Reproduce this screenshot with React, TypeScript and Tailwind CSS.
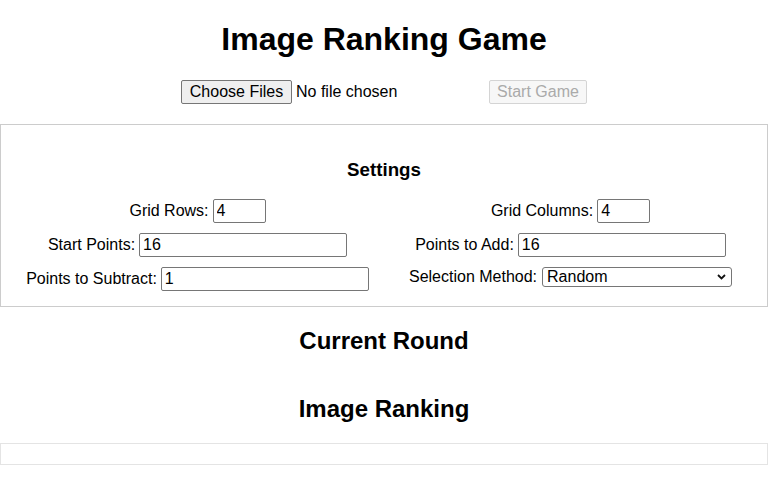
import { useState } from "react";

type Field = {
  label: string;
  value: string;
  width: string;
};

const leftFields: Field[] = [
  { label: "Grid Rows:", value: "4", width: "w-[53px]" },
  { label: "Start Points:", value: "16", width: "w-[208px]" },
  { label: "Points to Subtract:", value: "1", width: "w-[208px]" },
];

const rightFields: Field[] = [
  { label: "Grid Columns:", value: "4", width: "w-[53px]" },
  { label: "Points to Add:", value: "16", width: "w-[208px]" },
];

function SettingInput({ field }: { field: Field }) {
  const [value, setValue] = useState(field.value);
  return (
    <div className="flex items-center justify-center gap-[4px] h-[24px]">
      <label className="text-[16px] leading-[20px]">{field.label}</label>
      <input
        type="text"
        value={value}
        onChange={(e) => setValue(e.target.value)}
        className={`${field.width} h-[24px] border border-[#767676] rounded-[2px] px-[3px] text-[16px] outline-none bg-white`}
      />
    </div>
  );
}

export default function App() {
  return (
    <div className="flex flex-col w-full min-h-[480px] bg-white text-black font-['Liberation_Sans',Arial,sans-serif]">
      <h1 className="mt-[21px] mb-[22px] text-[32px] leading-[37px] font-bold text-center">
        Image Ranking Game
      </h1>

      <div className="flex justify-center items-center h-[24px] mb-[20px]">
        <div className="flex items-center w-[298px] mr-[10px]">
          <button className="w-[111px] h-[24px] bg-[#efefef] border border-[#767676] rounded-[2px] text-[16px] leading-[20px] text-black">
            Choose Files
          </button>
          <span className="ml-[4px] text-[16px]">No file chosen</span>
        </div>
        <button
          disabled
          className="w-[98px] h-[24px] bg-[#f7f7f7] border border-[#d4d4d4] rounded-[2px] text-[16px] leading-[20px] text-[#aaaaaa] disabled:cursor-default"
        >
          Start Game
        </button>
      </div>

      <div className="border border-[#cccccc] p-[15px]">
        <h3 className="mt-[19px] mb-[19px] text-[18.72px] leading-[21px] font-bold text-center">
          Settings
        </h3>
        <div className="grid grid-cols-2 gap-[10px]">
          <SettingInput field={leftFields[0]} />
          <SettingInput field={rightFields[0]} />
          <SettingInput field={leftFields[1]} />
          <SettingInput field={rightFields[1]} />
          <SettingInput field={leftFields[2]} />
          <div className="flex items-start justify-center gap-[5px] h-[24px]">
            <label className="text-[16px] leading-[20px]">Selection Method:</label>
            <div className="w-[190px] h-[20px] border border-[#767676] rounded-[3px] flex items-center justify-between pl-[4px] pr-[4px] bg-white">
              <span className="text-[16px] leading-[18px]">Random</span>
              <svg width="9" height="6" viewBox="0 0 9 6" className="mr-[1px]">
                <path d="M1 1 L4.5 4.5 L8 1" fill="none" stroke="#111" strokeWidth="1.8" />
              </svg>
            </div>
          </div>
        </div>
      </div>

      <h2 className="mt-[20px] mb-[20px] text-[24px] leading-[28px] font-bold text-center">
        Current Round
      </h2>

      <h2 className="mt-[20px] mb-[20px] text-[24px] leading-[28px] font-bold text-center">
        Image Ranking
      </h2>

      <div className="border border-[#e4e4e4] p-[10px]"></div>
    </div>
  );
}
